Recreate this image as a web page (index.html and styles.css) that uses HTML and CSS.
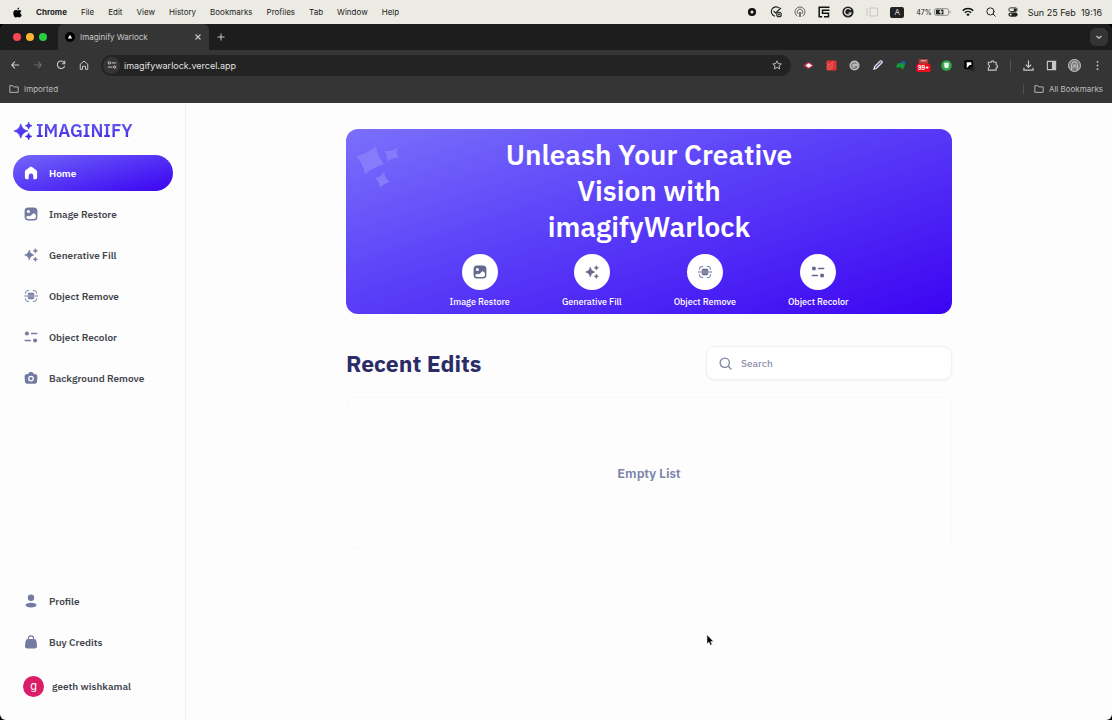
FILE: index.html
```html
<!DOCTYPE html>
<html lang="en">
<head>
<meta charset="utf-8">
<title>Imaginify Warlock</title>
<meta name="viewport" content="width=device-width, initial-scale=1">
<link rel="stylesheet" href="styles.css">
</head>
<body>
<svg class="defs" aria-hidden="true">
  <defs>
    <linearGradient id="brand" x1="0" y1="0" x2="1" y2="1"><stop offset="0" stop-color="#6558f5"/><stop offset="1" stop-color="#3a12e8"/></linearGradient>
    <symbol id="sparkle" viewBox="0 0 24 24"><path d="M9 3.500c1.200 5 3 7 8 8.500c-5 1.500-6.800 3.500-8 8.500c-1.200-5-3-7-8-8.500c5-1.500 6.800-3.500 8-8.500zM19.500 1c.6 2.400 1.400 3.200 3.800 3.900c-2.400.7-3.200 1.500-3.800 3.900c-.6-2.400-1.400-3.200-3.800-3.900c2.400-.7 3.200-1.500 3.800-3.900zM19.500 15.500c.6 2.400 1.400 3.200 3.800 3.900c-2.400.7-3.200 1.500-3.800 3.900c-.6-2.400-1.400-3.200-3.800-3.900c2.400-.7 3.200-1.500 3.800-3.900z" stroke="currentColor" stroke-width="1" stroke-linejoin="round"/></symbol>
    <symbol id="brand-stars" viewBox="0 0 24 24"><path d="M9 2.500c1.500 5.500 4 8 9.500 9.500c-5.500 1.500-8 4-9.500 9.500C7.500 16 5 13.500-.5 12C5 10.500 7.500 8 9 2.500zM19.500.3c.7 2.900 1.600 3.800 4.500 4.700c-2.900.8-3.800 1.700-4.500 4.600C18.800 6.700 17.900 5.800 15 5c2.900-.9 3.800-1.800 4.500-4.700zM19.500 14.500c.7 2.900 1.600 3.800 4.500 4.700c-2.900.8-3.800 1.700-4.500 4.600c-.7-2.900-1.600-3.800-4.500-4.600c2.900-.9 3.800-1.800 4.500-4.700z" fill="url(#brand)" stroke="#503df0" stroke-width="1" stroke-linejoin="round"/></symbol>
    <symbol id="house" viewBox="0 0 24 24"><path d="M10.200 1.600a3 3 0 0 1 3.600 0l7.400 5.800A3.500 3.500 0 0 1 22.500 10v9.500a3 3 0 0 1-3 3H16V17a4 4 0 0 0-8 0v5.500H4.500a3 3 0 0 1-3-3V10a3.500 3.500 0 0 1 1.300-2.600z"/></symbol>
    <symbol id="image" viewBox="0 0 24 24"><path fill-rule="evenodd" d="M7 1h10a6 6 0 0 1 6 6v10a6 6 0 0 1-6 6H7a6 6 0 0 1-6-6V7a6 6 0 0 1 6-6zM7.500 5a2.700 2.700 0 1 0 0 5.400a2.700 2.700 0 0 0 0-5.400zM3.500 17.200c.4 2.300 1.700 3.300 3.700 3.300h9.600c2.400 0 3.700-1.400 3.700-3.700v-3.300l-2.800-2.200c-.8-.6-1.700-.6-2.400.1l-4 3.700c-.8.7-1.600.8-2.500.2c-.8-.6-1.700-.5-2.500.1z"/></symbol>
    <symbol id="scan" viewBox="0 0 24 24"><g fill="none" stroke="currentColor" stroke-width="1.600" stroke-linecap="round"><path d="M2.500 7.500V7A4.500 4.500 0 0 1 7 2.500h1M16 2.500h1A4.500 4.500 0 0 1 21.500 7v.5M21.500 16.500v.5a4.500 4.500 0 0 1-4.500 4.500h-1M8 21.500H7A4.500 4.500 0 0 1 2.500 17v-.5M0 12h24"/></g><path d="M6.500 10V9A2.500 2.500 0 0 1 9 6.500h6A2.500 2.500 0 0 1 17.500 9v1zM6.500 14v1A2.500 2.500 0 0 0 9 17.500h6a2.500 2.500 0 0 0 2.500-2.500v-1z"/><path d="M6.500 9.500h11v5h-11z" opacity=".6"/></symbol>
    <symbol id="filter" viewBox="0 0 24 24"><circle cx="5" cy="6" r="3.500"/><circle cx="19" cy="18" r="3.500"/><path d="M13 6h9M2 18h9" stroke="currentColor" stroke-width="2.200" stroke-linecap="round"/></symbol>
    <symbol id="camera" viewBox="0 0 24 24"><path fill-rule="evenodd" d="M8 3.500C8.700 2.200 9.600 1.500 11 1.500h2c1.400 0 2.300.7 3 2l.8 1.500h1.200a5 5 0 0 1 5 5.500l-.6 7a5 5 0 0 1-5 4.500H6.600a5 5 0 0 1-5-4.500L1 10.500A5 5 0 0 1 6 5h1.200zM12 8a5 5 0 1 0 0 10a5 5 0 0 0 0-10zM12 10.200a2.800 2.800 0 1 1 0 5.600a2.800 2.800 0 0 1 0-5.600z"/></symbol>
    <symbol id="user" viewBox="0 0 24 24"><circle cx="12" cy="6.500" r="5.500"/><ellipse cx="12" cy="19" rx="9.500" ry="4"/></symbol>
    <symbol id="bag" viewBox="0 0 24 24"><path d="M7.500 10V6a4.500 4.500 0 0 1 9 0v4" fill="none" stroke="currentColor" stroke-width="1.800"/><path d="M7 7h10c2.500 0 3.800 1.200 4.200 3.500l1.100 7.500c.5 3.300-1 5-4.300 5H6c-3.300 0-4.800-1.700-4.300-5l1.100-7.500C3.200 8.200 4.500 7 7 7z"/></symbol>
    <symbol id="folder" viewBox="0 0 12 12"><path d="M1 2h3.500l1.200 1.500H11V10H1z" fill="none" stroke="currentColor" stroke-width="1.100" stroke-linejoin="round"/></symbol>
    <symbol id="magnifier" viewBox="0 0 12 12"><g fill="none" stroke="currentColor" stroke-width="1.200" stroke-linecap="round"><circle cx="5.300" cy="5.300" r="4.300"/><path d="M8.500 8.500l2.600 2.600"/></g></symbol>
  </defs>
</svg>

<header class="menubar">
  <nav class="menus" aria-label="Menu bar">
    <svg class="apple" viewBox="0 0 20 24"><path d="M13.800 1c.2 2.300-1.700 4.700-4.100 4.700C9.500 3.400 11.500 1.200 13.800 1zM14 6.500c1.800 0 3.500.9 4.500 2.400c-3.500 2.200-2.900 6.900.8 8.400c-1 2.700-2.800 5.700-5 5.700c-1.700 0-2.200-1-4-1s-2.400 1-4 1C3.500 23 .7 18 .7 13.500C.7 9.200 3.300 6.500 6.300 6.500c1.700 0 2.900 1.100 4 1.100s2.100-1.100 3.700-1.100z"/></svg>
    <b>Chrome</b><span>File</span><span>Edit</span><span>View</span><span>History</span><span>Bookmarks</span><span>Profiles</span><span>Tab</span><span>Window</span><span>Help</span>
  </nav>
  <div class="status">
    <svg class="ico" viewBox="0 0 12 12"><circle cx="6" cy="6" r="2.800" fill="none" stroke="#111" stroke-width="2.600"/></svg>
    <svg class="ico" viewBox="0 0 12 12"><g fill="none" stroke="#222" stroke-width="1.100"><path d="M9.500 2.200A4.800 4.800 0 1 0 5 10.300"/><path d="M3.500 5l2 2L11 2"/><circle cx="9" cy="8.500" r="2.300"/></g><circle cx="9" cy="8.500" r="1"/></svg>
    <svg class="ico" viewBox="0 0 12 12"><g fill="none" stroke="#555" stroke-width=".9"><path d="M3.500 10.300a5 5 0 1 1 5 0"/><path d="M4.300 8a2.700 2.700 0 1 1 3.400 0"/><path d="M6 6v5" stroke-width="1.600"/></g></svg>
    <svg class="ico" viewBox="0 0 12 12"><path d="M11.500 1.200H1.200v9.600h3M11.500 4.200H4.500v3h6v3.600H6" fill="none" stroke="#111" stroke-width="1.500"/></svg>
    <svg class="ico" viewBox="0 0 12 12"><circle cx="6" cy="6" r="5.600"/><path d="M8.700 4A3.300 3.300 0 1 0 9 7H6.500" fill="none" stroke="#eceae2" stroke-width="1.200"/></svg>
    <svg class="ico faint" viewBox="0 0 12 12"><path d="M1 2v8M4 2h7.500v8H4z" fill="none" stroke="#999" stroke-width=".9"/></svg>
    <span class="lang">A</span>
    <span class="battery">47%<svg class="cell" viewBox="0 0 18 8"><rect x=".5" y=".5" width="15" height="7" rx="2" fill="none" stroke="#888"/><path d="M2 1.500h8v5H2z"/><path d="M7.500.5L5 4.500h2l-.5 3L9.500 3.500h-2z" fill="#eceae2"/><path d="M17 3v2" stroke="#888"/></svg></span>
    <svg class="ico" viewBox="0 0 12 12"><g fill="none" stroke="#111" stroke-width="1.500"><path d="M.8 4.600a7.500 7.500 0 0 1 10.400 0M2.800 6.800a4.600 4.600 0 0 1 6.400 0"/></g><path d="M4.200 8.400a2.500 2.500 0 0 1 3.600 0L6 10.300z"/></svg>
    <svg class="ico small"><use href="#magnifier"/></svg>
    <svg class="ico small" viewBox="0 0 12 12"><rect x="1" y="1" width="10" height="4.400" rx="2.200" fill="none" stroke="#111"/><circle cx="8.500" cy="3.200" r="1.800"/><rect x=".5" y="6.600" width="11" height="5" rx="2.500"/><circle cx="3.200" cy="9.100" r="1.200" fill="#eceae2"/></svg>
    <time class="clock">Sun 25 Feb&nbsp; 19:16</time>
  </div>
</header>

<div class="window">
  <div class="tabstrip">
    <div class="lights"><i class="red"></i><i class="amber"></i><i class="green"></i></div>
    <div class="tab">
      <svg class="favicon" viewBox="0 0 12 12"><circle cx="6" cy="6" r="6" fill="#000"/><path d="M6 3.300l2.600 4.600H3.400z" fill="#fff"/></svg>
      <span class="tab-title">Imaginify Warlock</span>
      <button class="plain" aria-label="Close tab"><svg class="tiny" viewBox="0 0 8 8"><path d="M1.500 1.500l5 5M6.500 1.500l-5 5" stroke="currentColor" stroke-width="1.100"/></svg></button>
    </div>
    <button class="plain newtab" aria-label="New tab"><svg class="tiny" viewBox="0 0 8 8"><path d="M4 .5v7M.5 4h7" stroke="currentColor"/></svg></button>
    <button class="plain tabsearch" aria-label="Search tabs"><svg class="tiny" viewBox="0 0 8 8"><path d="M1.500 3L4 5.300L6.500 3" fill="none" stroke="currentColor" stroke-width="1.200"/></svg></button>
  </div>
  <div class="toolbar">
    <div class="navs">
      <button class="plain" aria-label="Back"><svg class="tool" viewBox="0 0 12 12"><path d="M11 6H2M6 2L2 6l4 4" fill="none" stroke="currentColor" stroke-width="1.300"/></svg></button>
      <button class="plain dim" aria-label="Forward"><svg class="tool" viewBox="0 0 12 12"><path d="M1 6h9M6 2l4 4l-4 4" fill="none" stroke="currentColor" stroke-width="1.300"/></svg></button>
      <button class="plain" aria-label="Reload"><svg class="tool" viewBox="0 0 12 12"><path d="M9.800 3.200A4.500 4.500 0 1 0 10.400 7M10.500 1v3.500H7" fill="none" stroke="currentColor" stroke-width="1.300"/></svg></button>
      <button class="plain" aria-label="Home page"><svg class="tool" viewBox="0 0 12 12"><path d="M1.500 5L6 1.300L10.500 5v6.200H7.800V7.500H4.200v3.700H1.500z" fill="none" stroke="currentColor" stroke-width="1.200"/></svg></button>
    </div>
    <div class="omnibox">
      <span class="siteinfo"><svg class="tool" viewBox="0 0 12 12"><g fill="none" stroke="currentColor" stroke-width="1.200"><circle cx="2.800" cy="3.500" r="1.400"/><path d="M5.500 3.500H11M1 8.500h5.500"/><circle cx="9.200" cy="8.500" r="1.400"/></g></svg></span>
      <input class="url" type="text" aria-label="Address" value="imagifywarlock.vercel.app">
      <button class="plain" aria-label="Bookmark this page"><svg class="tool" viewBox="0 0 12 12"><path d="M6 1l1.500 3.300l3.600.4l-2.700 2.400l.8 3.600L6 8.900l-3.200 1.800l.8-3.600L.9 4.700l3.600-.4z" fill="none" stroke="currentColor" stroke-width="1.100"/></svg></button>
    </div>
    <div class="extensions">
      <svg class="ext" viewBox="0 0 12 12"><path d="M.5 6l4-3.200h3l4 3.200l-4 3.200h-3z" fill="#c9304b"/><path d="M3 6l3-2.500L10 6L6 8.500z" fill="#fff"/></svg>
      <svg class="ext" viewBox="0 0 12 12"><rect x=".5" y=".5" width="11" height="11" rx="1.500" fill="#dc3434"/><path d="M1 4l3 1.400L8 2M1 6.700l3 1.400L8 4.700M1 9.300l3 1.200L8 7.300" fill="none" stroke="#f0706a"/></svg>
      <svg class="ext" viewBox="0 0 12 12"><circle cx="6" cy="6" r="5.500" fill="#b9b9b9"/><path d="M8.200 4.200a3 3 0 1 0 .5 3H6" fill="none" stroke="#777" stroke-width="1.200"/></svg>
      <svg class="ext" viewBox="0 0 12 12"><path d="M2 10l1-3l6-6a1.500 1.500 0 0 1 2 2L5 9z" fill="#5b6590" stroke="#e6e9f5" stroke-width="1.200"/></svg>
      <svg class="ext" viewBox="0 0 12 12"><path d="M1 7l2-3.500l6-.5l2 3l-3 5l-1.500-3L3 8.500z" fill="#129b36"/><path d="M7 1l4.500.5L11 5L8 4z" fill="#1766ad"/></svg>
      <svg class="ext wide" viewBox="0 0 16 16"><path d="M3 1h10v6H3z" fill="#b13a36"/><path d="M5 3h6" stroke="#ddd"/><rect x=".5" y="6" width="15" height="9" rx="2" fill="#ed0c20"/><text x="8" y="13" text-anchor="middle" class="badge">99+</text></svg>
      <svg class="ext" viewBox="0 0 12 12"><circle cx="6" cy="6" r="5.700" fill="#35a852"/><path d="M3.500 3h5v3.500A2.500 2.500 0 0 1 6 9a2.500 2.500 0 0 1-2.500-2.500z" fill="#e8f6e9"/></svg>
      <svg class="ext" viewBox="0 0 12 12"><rect width="10" height="10" rx="2" fill="#050505"/><path d="M3 2.500h5v3H6L3 9z" fill="#fff"/><circle cx="9.500" cy="9.500" r="2.500" fill="#222"/></svg>
      <svg class="ext" viewBox="0 0 12 12"><path d="M1.500 2.500h3a1.500 1.500 0 0 1 3 0H10v3a1.500 1.500 0 0 1 0 3V11H1.500V8.500a1.700 1.700 0 0 0 0-3.300z" fill="none" stroke="currentColor" stroke-width="1.200"/></svg>
      <i class="rule"></i>
      <svg class="ext" viewBox="0 0 12 12"><path d="M6 .5v7M3 5l3 3l3-3M1 8.500V11h10V8.500" fill="none" stroke="currentColor" stroke-width="1.300"/></svg>
      <svg class="ext" viewBox="0 0 12 12"><path d="M1.500 1.500h9v9h-9z" fill="none" stroke="currentColor" stroke-width="1.200"/><path d="M6.500 1.500h4v9h-4z" fill="currentColor"/></svg>
      <svg class="ext avatar" viewBox="0 0 14 14"><circle cx="7" cy="7" r="6.500" fill="#777" stroke="#ccc"/><path d="M4 12V6a3 3 0 0 1 6 0v6M5.500 6.500h3M5 9l2-1l2 1" fill="none" stroke="#ddd" stroke-width=".9"/></svg>
      <svg class="ext" viewBox="0 0 12 12"><circle cx="6" cy="2" r="1"/><circle cx="6" cy="6" r="1"/><circle cx="6" cy="10" r="1"/></svg>
    </div>
  </div>
  <div class="bookmarks">
    <span class="mark"><svg class="tool"><use href="#folder"/></svg>Imported</span>
    <span class="mark all"><svg class="tool"><use href="#folder"/></svg>All Bookmarks</span>
  </div>

  <div class="page">
    <aside class="sidebar">
      <a class="logo" href="#"><svg class="logo-mark"><use href="#brand-stars"/></svg><span class="wordmark">IMAGINIFY</span></a>
      <nav class="links">
        <a class="link active" href="#"><svg class="glyph"><use href="#house"/></svg>Home</a>
        <a class="link" href="#"><svg class="glyph"><use href="#image"/></svg>Image Restore</a>
        <a class="link" href="#"><svg class="glyph"><use href="#sparkle"/></svg>Generative Fill</a>
        <a class="link" href="#"><svg class="glyph"><use href="#scan"/></svg>Object Remove</a>
        <a class="link" href="#"><svg class="glyph"><use href="#filter"/></svg>Object Recolor</a>
        <a class="link" href="#"><svg class="glyph"><use href="#camera"/></svg>Background Remove</a>
      </nav>
      <nav class="links bottom">
        <a class="link" href="#"><svg class="glyph"><use href="#user"/></svg>Profile</a>
        <a class="link" href="#"><svg class="glyph"><use href="#bag"/></svg>Buy Credits</a>
        <button class="account"><span class="initial">g</span>geeth wishkamal</button>
      </nav>
    </aside>

    <main class="main">
      <div class="content">
        <section class="banner">
          <svg class="stars" viewBox="0 0 44 46"><path d="M20 2Q21 12 28 20Q18 23 9 30Q7 19 0 12Q11 10 20 2zM42 3Q39 9 43 14Q36 13 31 18Q32 11 28 7Q36 8 42 3zM28 28Q29 35 34 38Q28 39 24 44Q24 38 19 34Q25 33 28 28z"/></svg>
          <h1 class="headline">Unleash Your Creative Vision with imagifyWarlock</h1>
          <div class="features">
            <a class="feature" href="#"><span class="disc"><svg class="glyph"><use href="#image"/></svg></span>Image Restore</a>
            <a class="feature" href="#"><span class="disc"><svg class="glyph"><use href="#sparkle"/></svg></span>Generative Fill</a>
            <a class="feature" href="#"><span class="disc"><svg class="glyph"><use href="#scan"/></svg></span>Object Remove</a>
            <a class="feature" href="#"><span class="disc"><svg class="glyph"><use href="#filter"/></svg></span>Object Recolor</a>
          </div>
        </section>
        <div class="recent">
          <h2 class="heading">Recent Edits</h2>
          <label class="search"><svg class="search-icon"><use href="#magnifier"/></svg><input class="search-input" type="text" placeholder="Search" aria-label="Search"></label>
        </div>
        <div class="empty">Empty List</div>
      </div>
    </main>
  </div>
</div>
<svg class="pointer" viewBox="0 0 8 12" aria-hidden="true"><path d="M1 .8v9l2-1.800l1.400 3.200l1.600-.7L4.700 7.400h2.700z" fill="#000" stroke="#ddd" stroke-width=".6"/></svg>
</body>
</html>
```

FILE: styles.css
```css
* { box-sizing: border-box; }
body {
  margin: 0;
  min-height: 100vh;
  display: flex;
  flex-direction: column;
  background: #000;
  font-family: Inter, "Liberation Sans", sans-serif;
  font-size: 8px;
  color: #222;
}
svg { display: block; flex: none; fill: currentColor; }
a { color: inherit; text-decoration: none; }
.defs { position: absolute; width: 0; height: 0; }
.plain { display: flex; border: 0; padding: 0; background: none; color: inherit; }

.menubar {
  display: flex;
  justify-content: space-between;
  align-items: center;
  height: 24px;
  padding: 0 10px 0 13px;
  background: #ecebe3;
}
.menus { display: flex; align-items: center; gap: 14px; white-space: nowrap; }
.apple { width: 9px; height: 11px; color: #000; }
.status { display: flex; align-items: center; gap: 12px; white-space: nowrap; color: #222; }
.ico { width: 12px; height: 12px; }
.ico.small { width: 10px; height: 10px; }
.faint { opacity: 0.5; }
.lang { width: 14px; border-radius: 2px; background: #222; color: #ddd; line-height: 11px; text-align: center; }
.battery { display: flex; align-items: center; gap: 2px; margin-right: -1px; font-size: 7px; }
.cell { width: 17px; height: 8px; }
.clock { margin-left: -2px; font-size: 9px; }

.window {
  flex: 1;
  display: flex;
  flex-direction: column;
  overflow: hidden;
  border-radius: 6px;
  background: #353535;
  color: #c8c8c8;
}
.tabstrip { display: flex; height: 26px; padding: 0 4px 0 13px; background: #1d1d1d; align-items: center; }
.lights { display: flex; gap: 5px; margin-right: 11px; }
.lights i { width: 8px; height: 8px; border-radius: 50%; }
.red { background: #fb4656; }
.amber { background: #fdb62f; }
.green { background: #28ce42; }
.tab {
  display: flex;
  align-items: center;
  align-self: flex-end;
  gap: 5px;
  width: 151px;
  height: 26px;
  padding: 0 7px 0 7px;
  border-radius: 6px 6px 0 0;
  background: #353535;
}
.favicon { width: 10px; height: 10px; }
.tab-title { flex: 1; white-space: nowrap; }
.tiny { width: 8px; height: 8px; }
.newtab { margin-left: 8px; }
.tabsearch { margin-left: auto; width: 18px; height: 18px; align-items: center; justify-content: center; border-radius: 6px; background: #343434; }

.toolbar { display: flex; align-items: center; height: 30px; padding: 0 9px 0 10px; }
.navs { display: flex; gap: 13px; margin-right: 12px; }
.tool { width: 10px; height: 10px; }
.dim { color: #6c6c6c; }
.omnibox { flex: 1; display: flex; align-items: center; height: 21px; padding: 0 9px 0 2px; border-radius: 11px; background: #232323; }
.siteinfo { display: flex; align-items: center; justify-content: center; width: 17px; height: 17px; border-radius: 50%; background: #353535; }
.url { flex: 1; min-width: 0; border: 0; padding: 0 4px; background: none; font: 9px Inter, sans-serif; color: #e0e0e0; outline: 0; }
.extensions { display: flex; align-items: center; gap: 12px; margin-left: 12px; }
.ext { width: 11px; height: 11px; }
.ext.wide { width: 15px; height: 15px; margin: 0 -2px; }
.ext.avatar { width: 13px; height: 13px; margin: 0 -1px; }
.ext .badge { font: 700 6px Inter, sans-serif; fill: #fff; }
.rule { width: 1px; height: 11px; background: #555; }
.bookmarks { display: flex; justify-content: space-between; align-items: center; height: 23px; padding: 0 9px 5px; color: #bdbdbd; }
.mark { display: flex; align-items: center; gap: 5px; }
.mark.all { padding-left: 10px; border-left: 1px solid #505050; }

.page {
  flex: 1;
  display: flex;
  background: #fdfdfe;
  font-family: "IBM Plex Sans", "Noto Sans", sans-serif;
}
.sidebar {
  display: flex;
  flex-direction: column;
  width: 186px;
  padding: 18px 12px 13px 13px;
  border-right: 1px solid #f1f1f6;
}
.logo { display: flex; align-items: center; gap: 4px; height: 20px; margin-bottom: 14px; padding-left: 1px; color: #4f3df0; }
.logo-mark { width: 18px; height: 18px; }
.wordmark {
  font: 600 18px/20px "IBM Plex Sans", "Noto Sans", sans-serif;
  background: linear-gradient(180deg, #6a5ef0, #4022e6);
  background-clip: text;
  -webkit-background-clip: text;
  color: transparent;
}
.links { display: flex; flex-direction: column; gap: 5px; }
.bottom { margin-top: auto; }
.link {
  display: flex;
  align-items: center;
  gap: 11px;
  height: 36px;
  padding: 0 11px;
  border-radius: 18px;
  font-size: 10px;
  font-weight: 600;
  color: #45474f;
  white-space: nowrap;
}
.glyph { width: 14px; height: 14px; color: #737ba3; }
.active { background: linear-gradient(165deg, #7368f8 0%, #5739f6 45%, #3b03f2 100%); color: #fff; }
.active .glyph { color: #fff; }
.account { display: flex; align-items: center; gap: 8px; height: 42px; padding: 0 10px; border: 0; background: none; font: 600 10px "IBM Plex Sans", "Noto Sans", sans-serif; color: #45474f; white-space: nowrap; }
.initial { width: 21px; height: 21px; border-radius: 50%; background: #db1d68; color: #fff; font: 11px/20px Inter, sans-serif; text-align: center; }

.main { flex: 1; min-width: 0; padding: 26px 20px; }
.content { max-width: 606px; margin: 0 auto; }
.banner {
  position: relative;
  display: flex;
  flex-direction: column;
  align-items: center;
  gap: 9px;
  padding: 8px 16px 5px;
  border-radius: 12px;
  background: linear-gradient(162deg, #7a70fb 0%, #5c42f8 42%, #3c04f2 100%);
  color: #fff;
}
.stars { position: absolute; left: 10px; top: 15px; width: 44px; height: 46px; color: #857bfb; }
.headline { margin: 0; max-width: 320px; font-size: 28px; line-height: 36px; font-weight: 600; text-align: center; }
.features { display: flex; gap: 52px; }
.feature { display: flex; flex-direction: column; align-items: center; gap: 4px; font-size: 9px; line-height: 15px; font-weight: 500; white-space: nowrap; }
.disc { display: flex; align-items: center; justify-content: center; width: 36px; height: 36px; border-radius: 50%; background: #fff; }
.disc .glyph { color: #62698c; }
.recent { display: flex; align-items: center; justify-content: space-between; margin-top: 32px; }
.heading { margin: 0; font-size: 23px; line-height: 34px; font-weight: 700; color: #2b2c66; }
.search { display: flex; align-items: center; gap: 9px; width: 246px; height: 34px; padding: 0 12px; border: 1px solid #f0f0f6; border-radius: 9px; background: #fff; box-shadow: 0 1px 2px #f0f0f7; color: #7d83a2; }
.search-icon { width: 13px; height: 13px; }
.search-input { flex: 1; min-width: 0; border: 0; padding: 0; background: none; outline: 0; font: 500 10px "IBM Plex Sans", "Noto Sans", sans-serif; }
.search-input::placeholder { color: #8c90aa; opacity: 1; }
.empty { display: grid; place-items: center; min-height: 152px; margin-top: 17px; border: 1px solid #f9f9fc; border-radius: 8px; font-size: 13px; font-weight: 600; color: #7b84a8; }
.pointer { position: absolute; left: 706px; top: 634px; width: 8px; height: 12px; }
```
